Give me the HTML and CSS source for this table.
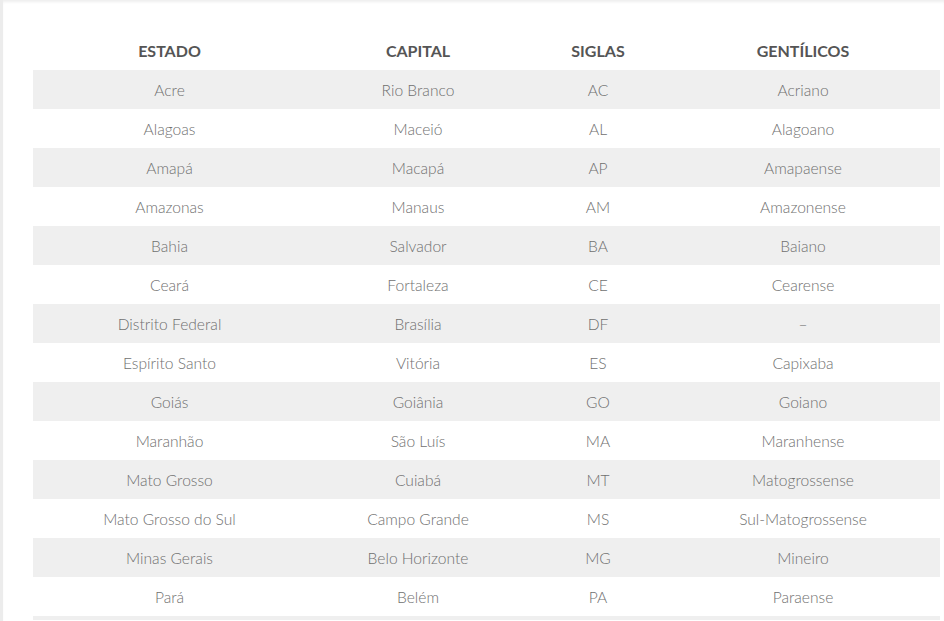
FILE: index.html
```html
<!DOCTYPE html>
<html lang="pt-BR">
<head>
<meta charset="utf-8">
<title>Estados do Brasil</title>
<link rel="stylesheet" href="styles.css">
</head>
<body>
<div class="frame">
  <table class="states">
    <colgroup>
      <col class="c1"><col class="c2"><col class="c3"><col class="c4">
    </colgroup>
    <thead>
      <tr><th>ESTADO</th><th>CAPITAL</th><th>SIGLAS</th><th>GENTÍLICOS</th></tr>
    </thead>
    <tbody>
      <tr><td>Acre</td><td>Rio Branco</td><td>AC</td><td>Acriano</td></tr>
      <tr><td>Alagoas</td><td>Maceió</td><td>AL</td><td>Alagoano</td></tr>
      <tr><td>Amapá</td><td>Macapá</td><td>AP</td><td>Amapaense</td></tr>
      <tr><td>Amazonas</td><td>Manaus</td><td>AM</td><td>Amazonense</td></tr>
      <tr><td>Bahia</td><td>Salvador</td><td>BA</td><td>Baiano</td></tr>
      <tr><td>Ceará</td><td>Fortaleza</td><td>CE</td><td>Cearense</td></tr>
      <tr><td>Distrito Federal</td><td>Brasília</td><td>DF</td><td>–</td></tr>
      <tr><td>Espírito Santo</td><td>Vitória</td><td>ES</td><td>Capixaba</td></tr>
      <tr><td>Goiás</td><td>Goiânia</td><td>GO</td><td>Goiano</td></tr>
      <tr><td>Maranhão</td><td>São Luís</td><td>MA</td><td>Maranhense</td></tr>
      <tr><td>Mato Grosso</td><td>Cuiabá</td><td>MT</td><td>Matogrossense</td></tr>
      <tr><td>Mato Grosso do Sul</td><td>Campo Grande</td><td>MS</td><td>Sul-Matogrossense</td></tr>
      <tr><td>Minas Gerais</td><td>Belo Horizonte</td><td>MG</td><td>Mineiro</td></tr>
      <tr><td>Pará</td><td>Belém</td><td>PA</td><td>Paraense</td></tr>
    </tbody>
  </table>
</div>
</body>
</html>
```
FILE: styles.css
```css
html, body {
  margin: 0;
  padding: 0;
  overflow: hidden;
  background: #ffffff;
}
.frame {
  min-height: 621px;
  border-left: 3px solid #ececec;
  box-shadow: inset 0 3px 3px -1px rgba(0, 0, 0, 0.07);
  padding: 31px 0 0 30px;
  box-sizing: border-box;
  font-family: Lato, "Open Sans", sans-serif;
}
.states {
  width: 907px;
  border-collapse: collapse;
  table-layout: fixed;
  border-bottom: 4px solid #efefef;
}
.c1 { width: 273px; }
.c2 { width: 224px; }
.c3 { width: 136px; }
.c4 { width: 274px; }
.states th {
  height: 39px;
  padding: 0;
  font-weight: 700;
  font-size: 16px;
  color: #555555;
  text-align: center;
  vertical-align: middle;
}
.states td {
  height: 39px;
  padding: 0;
  font-weight: 300;
  font-size: 15.6px;
  color: #707070;
  text-align: center;
  vertical-align: middle;
}
.states tbody tr:nth-child(odd) {
  background: #efefef;
}
```
